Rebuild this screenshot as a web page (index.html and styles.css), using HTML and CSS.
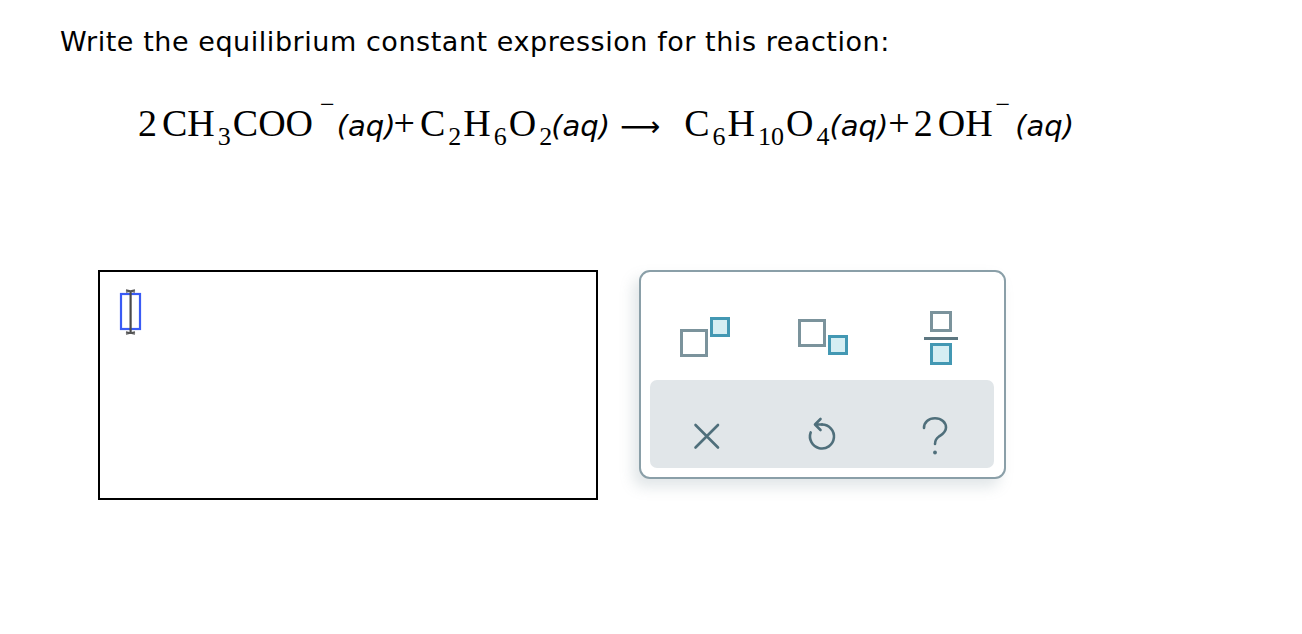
FILE: index.html
```html
<!DOCTYPE html>
<html>
<head>
<meta charset="utf-8">
<link rel="stylesheet" href="styles.css">
</head>
<body>
<div class="page">
  <h1 class="prompt">Write the equilibrium constant expression for this reaction:</h1>
  <div class="equation">
    <span class="num">2</span><span class="f m5">CH<sub>3</sub>COO<sup class="s1">−</sup></span><span class="aq a1">(aq)</span><span class="op o1">+</span><span class="f m5">C<sub>2</sub>H<sub>6</sub>O<sub>2</sub></span><span class="aq a2">(aq)</span><span class="arrow">⟶</span><span class="f">C<sub>6</sub>H<sub>10</sub>O<sub>4</sub></span><span class="aq a3">(aq)</span><span class="op">+</span><span class="num n2">2</span><span class="f m5">OH<sup class="s2">−</sup></span><span class="aq a4">(aq)</span>
  </div>
  <div class="work">
    <div class="answer">
      <svg class="cursor" width="26" height="48" viewBox="0 0 26 48">
        <rect x="3" y="6" width="19" height="35" fill="none" stroke="#3a5bf5" stroke-width="2.2"/>
        <rect x="11.5" y="3" width="2.2" height="42" fill="#4a4a4a"/>
        <path d="M8 2 L17 4 M8 4 L17 2" stroke="#555" stroke-width="1.4" fill="none"/>
        <path d="M8 44 L17 46 M8 46 L17 44" stroke="#555" stroke-width="1.4" fill="none"/>
      </svg>
    </div>
    <div class="palette">
      <div class="tools">
        <button class="tool" aria-label="superscript">
          <svg width="64" height="64" viewBox="0 0 64 64">
            <rect x="12.5" y="27.5" width="25" height="25" fill="none" stroke="#7b939c" stroke-width="3"/>
            <rect x="42.5" y="15.5" width="17" height="17" fill="#d5eef3" stroke="#4398b3" stroke-width="3"/>
          </svg>
        </button>
        <button class="tool" aria-label="subscript">
          <svg width="64" height="64" viewBox="0 0 64 64">
            <rect x="10.5" y="17.5" width="25" height="25" fill="none" stroke="#7b939c" stroke-width="3"/>
            <rect x="40.5" y="33.5" width="17" height="17" fill="#d5eef3" stroke="#4398b3" stroke-width="3"/>
          </svg>
        </button>
        <button class="tool" aria-label="fraction">
          <svg width="64" height="64" viewBox="0 0 64 64">
            <rect x="22.5" y="9.5" width="19" height="18" fill="none" stroke="#7b939c" stroke-width="3"/>
            <rect x="15" y="34" width="34" height="3" fill="#5d7781"/>
            <rect x="22.5" y="41.5" width="19" height="19" fill="#d5eef3" stroke="#4398b3" stroke-width="3"/>
          </svg>
        </button>
      </div>
      <div class="actions">
        <button class="tool" aria-label="clear">
          <svg width="40" height="40" viewBox="0 0 40 40">
            <path d="M8.5 9 L31 31.5 M31 9 L8.5 31.5" stroke="#4f6f7b" stroke-width="2.6" stroke-linecap="round" fill="none"/>
          </svg>
        </button>
        <button class="tool" aria-label="undo">
          <svg width="40" height="40" viewBox="0 0 40 40">
            <path d="M21 8.5 A12 12 0 1 1 9.7 16.4" stroke="#4f6f7b" stroke-width="2.6" stroke-linecap="round" fill="none"/>
            <path d="M21 8.5 L15 8.5 M19.5 3 L14 8.5 L19.5 14" stroke="#4f6f7b" stroke-width="2.6" stroke-linecap="round" stroke-linejoin="round" fill="none"/>
          </svg>
        </button>
        <button class="tool" aria-label="help">
          <svg width="40" height="40" viewBox="0 0 40 40">
            <path d="M9 12 C9 6 13.5 2.3 20 2.3 C26.5 2.3 31 6.5 31 11.5 C31 16.5 27 18.5 24 20.5 C21 22.5 20 24 20 28" stroke="#4f6f7b" stroke-width="2.6" stroke-linecap="round" fill="none"/>
            <circle cx="20" cy="36.5" r="1.9" fill="#4f6f7b"/>
          </svg>
        </button>
      </div>
    </div>
  </div>
</div>
</body>
</html>
```
FILE: styles.css
```css
html, body {
  margin: 0;
  padding: 0;
  background: #ffffff;
}
.page {
  width: 1302px;
  height: 634px;
  overflow: hidden;
}
.prompt {
  margin: 0;
  padding: 26px 0 0 60px;
  font-family: "DejaVu Sans", Verdana, sans-serif;
  font-weight: normal;
  font-size: 27px;
  line-height: 32px;
  letter-spacing: 0.55px;
  color: #000;
}
.equation {
  margin-top: 40px;
  padding-left: 138px;
  height: 50px;
  display: flex;
  align-items: baseline;
  font-family: "Liberation Serif", "Times New Roman", serif;
  font-size: 38px;
  line-height: 50px;
  color: #000;
  white-space: nowrap;
}
.equation sub, .equation sup {
  font-size: 26px;
  line-height: 0;
  position: relative;
  vertical-align: baseline;
}
.equation sub { top: 9px; margin: 0 2px 0 3px; }
.equation sup { top: -23px; }
.equation sup.s1 { margin-left: 7px; }
.equation sup.s2 { margin-left: 3px; }
.m5 { margin-left: 5px; }
.n2 { margin-left: 4px; }
.aq {
  font-family: "DejaVu Sans", Verdana, sans-serif;
  font-style: italic;
  font-size: 29px;
}
.a1 { margin-left: 2px; }
.a2 { margin-left: -3px; }
.a3 { margin-left: -2px; }
.a4 { margin-left: 5px; }
.o1 { margin-left: -2px; }
.arrow {
  font-family: "DejaVu Sans", sans-serif;
  font-size: 28px;
  margin: 0 24px 0 10px;
}

.work {
  display: flex;
  align-items: flex-start;
  margin-top: 122px;
  padding-left: 98px;
}
.answer {
  width: 500px;
  height: 230px;
  border: 2px solid #000;
  box-sizing: border-box;
  padding: 16px 0 0 18px;
}
.cursor { display: block; }

.palette {
  margin-left: 41px;
  width: 367px;
  height: 209px;
  border: 2px solid #8a9fa8;
  border-radius: 11px;
  box-sizing: border-box;
  background: #fff;
  box-shadow: -6px 8px 14px rgba(120, 140, 150, 0.22);
  padding: 0 0 0 9px;
}
.tool {
  border: 0;
  background: transparent;
  padding: 0;
  margin: 0;
  display: block;
  line-height: 0;
}
.tool svg { display: block; }
.tools {
  height: 108px;
  box-sizing: border-box;
  padding: 18px 0 0 19px;
  display: flex;
  gap: 56px;
}
.actions {
  width: 344px;
  height: 88px;
  box-sizing: border-box;
  background: #e1e6e9;
  border-radius: 7px;
  padding: 24px 0 0 37px;
  display: flex;
  gap: 74px;
}
```
